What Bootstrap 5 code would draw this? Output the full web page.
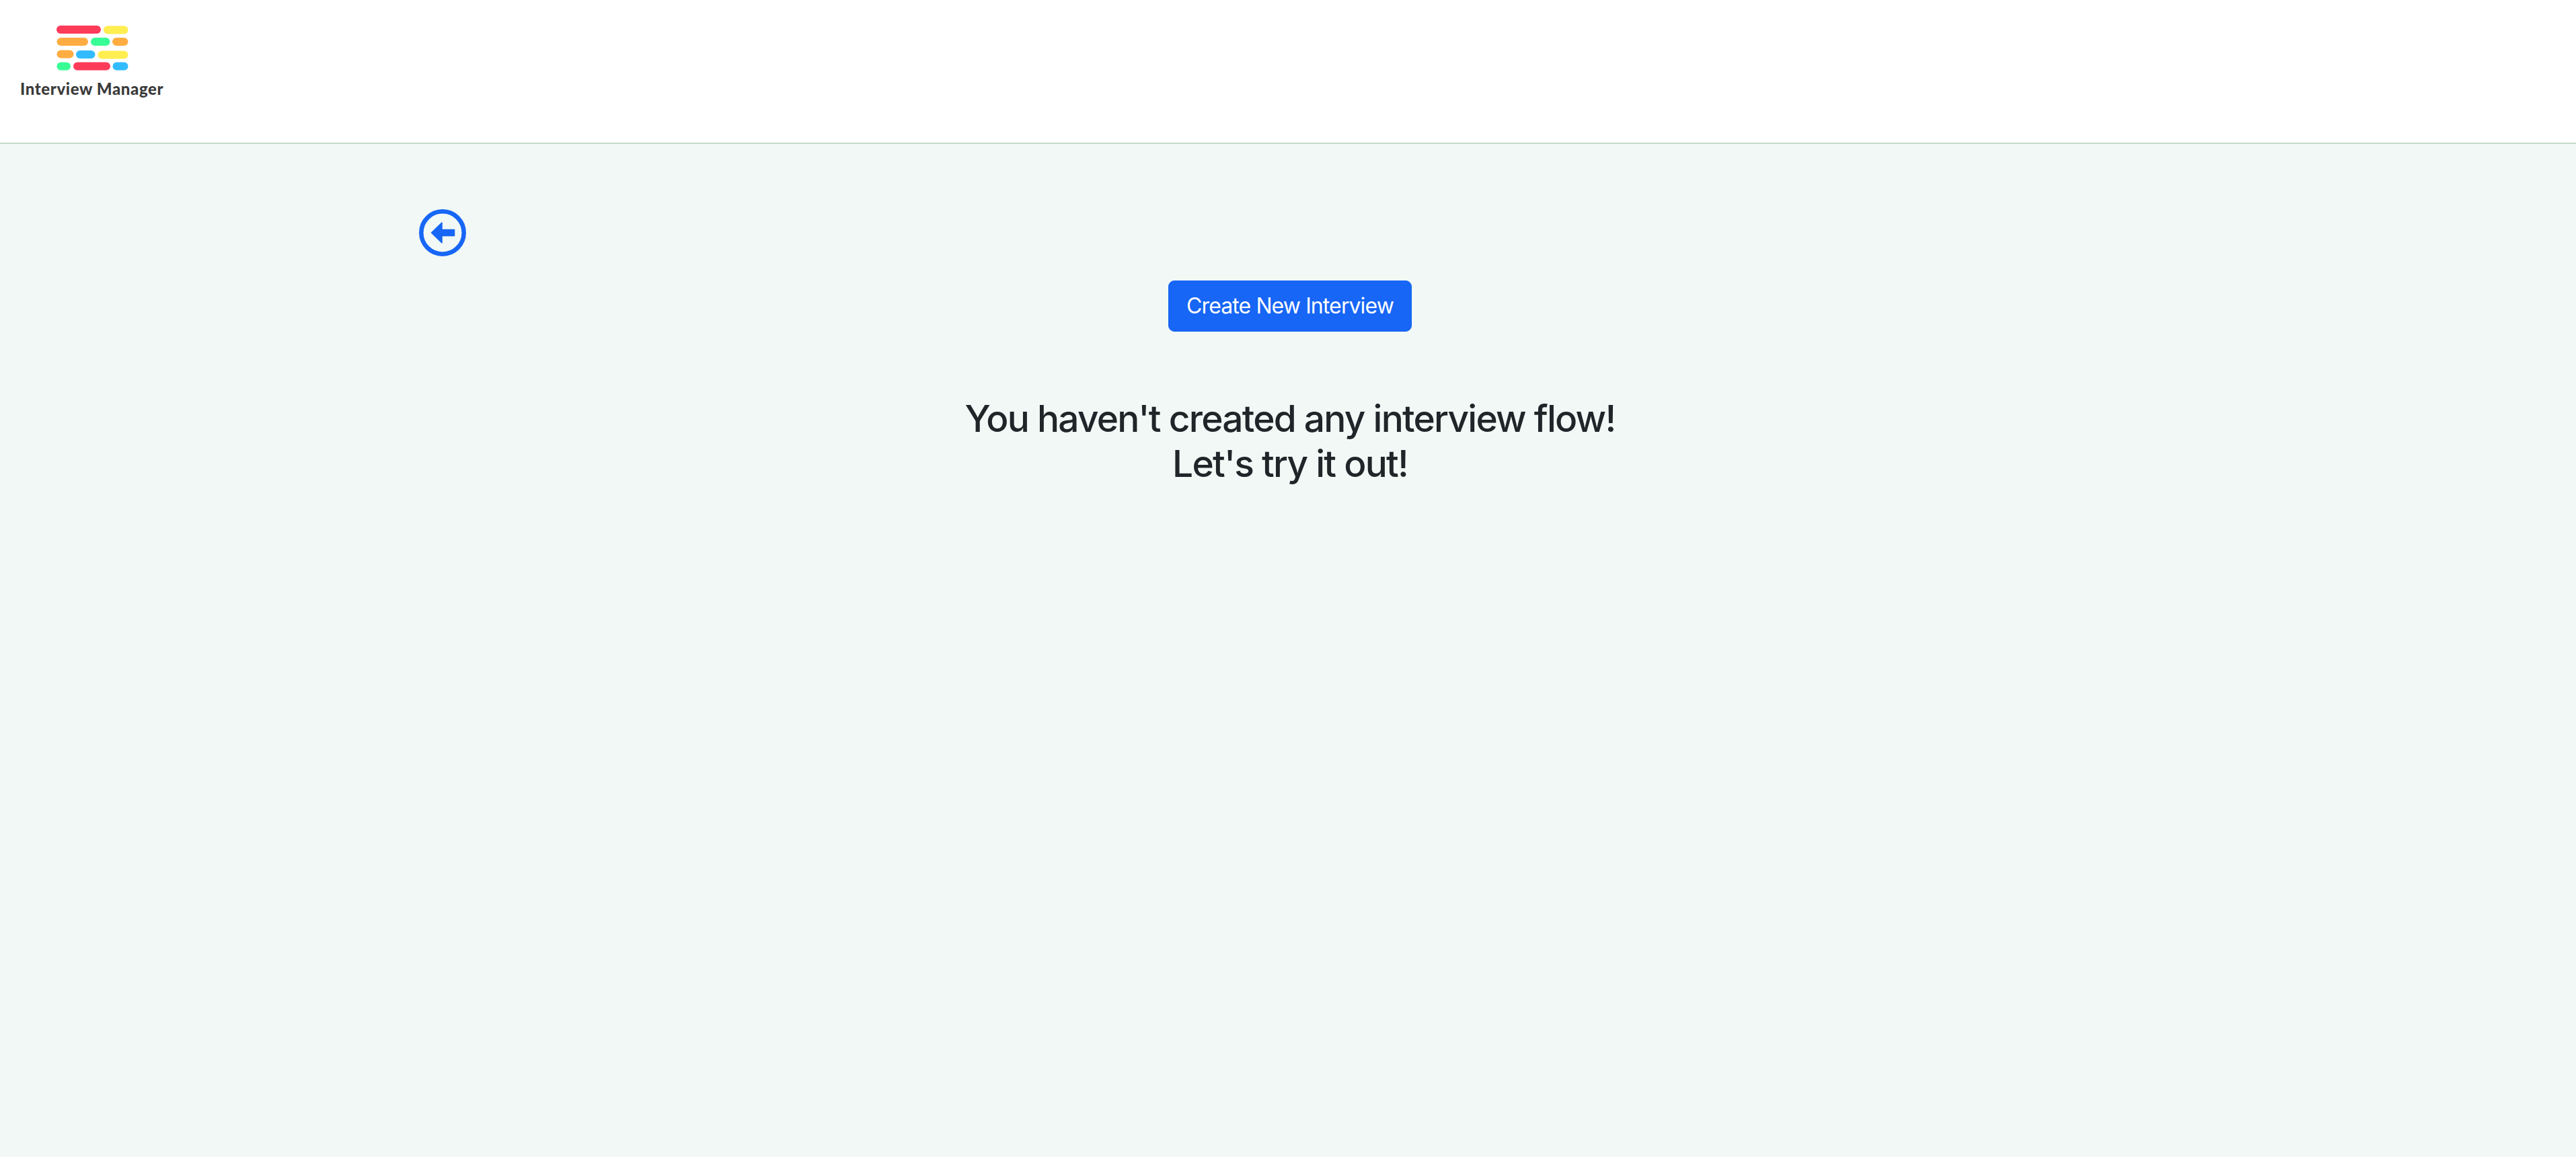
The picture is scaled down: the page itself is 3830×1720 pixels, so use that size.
<!DOCTYPE html>
<html lang="en">
<head>
    <meta charset="UTF-8">
    <meta name="viewport" content="width=device-width, initial-scale=1">
    <title>Interview Manager</title>
    <link href="https://cdn.jsdelivr.net/npm/bootstrap@5.3.0/dist/css/bootstrap.min.css" rel="stylesheet">
    <style>
        body {
            background-color: #f1f8f5;
            color: #212529;
            font-family: Inter, "Liberation Sans", sans-serif;
            min-height: 1720px;
        }
        .app-header {
            height: 214px;
            background-color: #fff;
            border-bottom: 2px solid #c3dcc6;
            padding: 38px 0 0 30px;
            align-items: flex-start;
        }
        .logo-box {
            width: 216px;
        }
        .logo-box svg {
            display: block;
            margin-left: 54px;
        }
        .logo-name {
            font-family: Lato, "Noto Sans", sans-serif;
            font-weight: 900;
            font-size: 24px;
            line-height: 28px;
            letter-spacing: 0.6px;
            color: #3b3b3b;
            margin-top: 13px;
            white-space: nowrap;
        }
        .main-area {
            padding: 97px 617px 0 623px;
        }
        .back-link {
            display: block;
            width: 70px;
            height: 70px;
        }
        .new-btn {
            --bs-btn-bg: #1766f5;
            --bs-btn-border-color: #1766f5;
            font-size: 32px;
            line-height: 48px;
            letter-spacing: -0.9px;
            padding: 13px 26px;
            border-radius: 9px;
            margin-top: 36px;
        }
        .empty-msg {
            font-size: 55px;
            font-weight: 500;
            line-height: 67px;
            letter-spacing: -1.75px;
            margin-top: 96px;
        }
    </style>
</head>
<body>
    <header class="navbar app-header">
        <a class="logo-box text-decoration-none" href="#">
            <svg width="107" height="67" viewBox="84 38 107 67" aria-hidden="true">
                <rect x="84" y="38" width="66" height="12" rx="6" fill="#ff3b5a"/>
                <rect x="154" y="38.5" width="36.5" height="12" rx="6" fill="#ffee50"/>
                <rect x="84.5" y="56" width="46.5" height="12" rx="6" fill="#ffad42"/>
                <rect x="135" y="56" width="28.5" height="12" rx="6" fill="#38fd94"/>
                <rect x="167" y="56" width="23.5" height="12" rx="6" fill="#ffad42"/>
                <rect x="84.5" y="74.5" width="25" height="12" rx="6" fill="#ffad42"/>
                <rect x="113" y="75" width="28.5" height="12" rx="6" fill="#32bcff"/>
                <rect x="145.500" y="75.500" width="45" height="12" rx="6" fill="#ffee50"/>
                <rect x="84.500" y="92.500" width="20.500" height="12" rx="6" fill="#38fd94"/>
                <rect x="109" y="92.500" width="55" height="12" rx="6" fill="#ff3b5a"/>
                <rect x="167.500" y="92.500" width="23" height="12" rx="6" fill="#32bcff"/>
            </svg>
            <div class="logo-name">Interview Manager</div>
        </a>
    </header>

    <main class="main-area">
        <a class="back-link" href="#" aria-label="Back">
            <svg width="70" height="70" viewBox="0 0 70 70" aria-hidden="true">
                <circle cx="35" cy="35" r="31.700" fill="none" stroke="#1766f5" stroke-width="6.500"/>
                <path d="M18.500 35 L34 20 V30.500 H52.500 V39.500 H34 V50 Z" fill="#1766f5" stroke="#1766f5" stroke-width="1.500" stroke-linejoin="round"/>
            </svg>
        </a>
        <div class="text-center">
            <button type="button" class="btn btn-primary new-btn">Create New Interview</button>
            <h2 class="empty-msg">You haven't created any interview flow!<br>Let's try it out!</h2>
        </div>
    </main>
</body>
</html>
